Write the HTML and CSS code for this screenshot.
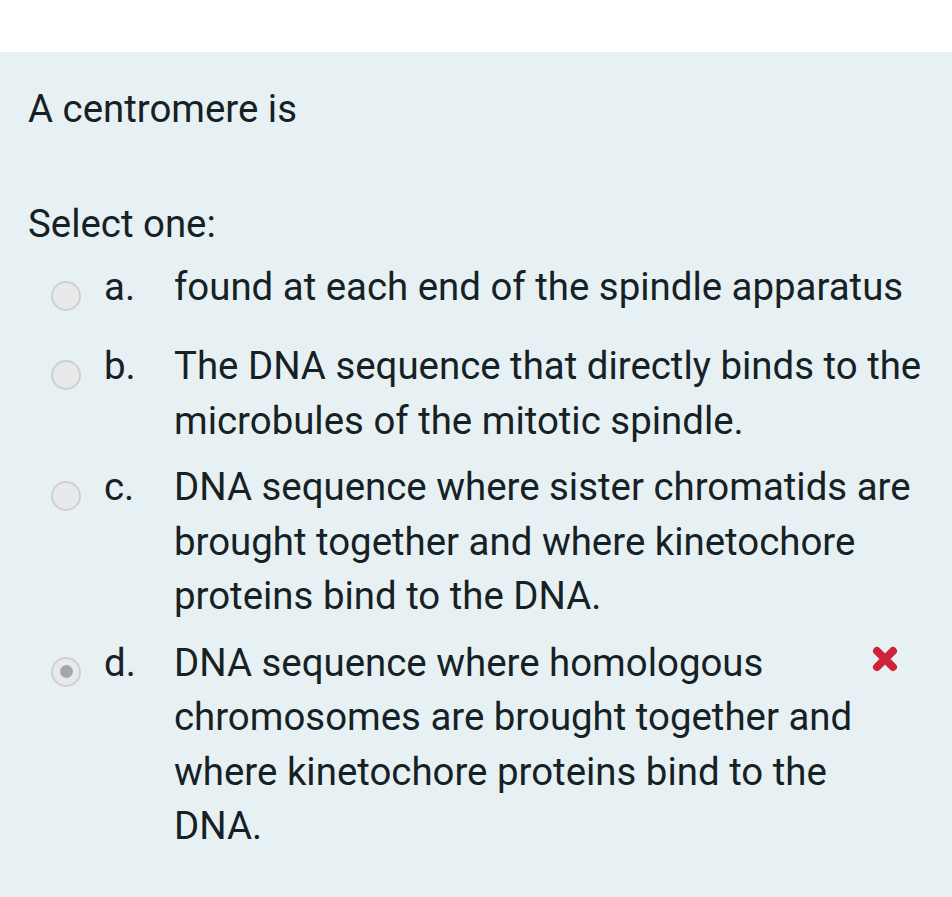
FILE: index.html
```html
<!DOCTYPE html>
<html lang="en">
<head>
<meta charset="utf-8">
<title>A centromere is</title>
<link rel="stylesheet" href="styles.css">
</head>
<body>
<div class="topbar"></div>
<div class="que">
  <div class="qtext">A centromere is</div>
  <div class="prompt">Select one:</div>
  <div class="answers">
    <div class="option first">
      <span class="radio"></span>
      <span class="letter">a.</span>
      <span class="text">found at each end of the spindle apparatus</span>
    </div>
    <div class="option">
      <span class="radio"></span>
      <span class="letter">b.</span>
      <span class="text">The DNA sequence that directly binds to the microbules of the mitotic spindle.</span>
    </div>
    <div class="option">
      <span class="radio"></span>
      <span class="letter">c.</span>
      <span class="text">DNA sequence where sister chromatids are brought together and where kinetochore proteins bind to the DNA.</span>
    </div>
    <div class="option">
      <span class="radio checked"></span>
      <span class="letter">d.</span>
      <span class="text">DNA sequence where homologous chromosomes are brought together and where kinetochore proteins bind to the DNA.</span>
      <svg class="wrong" width="30" height="30" viewBox="0 0 30 30" aria-hidden="true">
        <path d="M7 7 L23 23 M23 7 L7 23" stroke="#cf2337" stroke-width="8" stroke-linecap="round" fill="none"/>
      </svg>
    </div>
  </div>
</div>
</body>
</html>
```
FILE: styles.css
```css
html, body {
  margin: 0;
  padding: 0;
  background: #ffffff;
}
body {
  font-family: Roboto, "Noto Sans", "Liberation Sans", sans-serif;
  font-size: 38.4px;
  line-height: 54.5px;
  color: #162125;
}
.topbar {
  height: 52px;
  background: #ffffff;
}
.que {
  background: #e7f1f3;
  padding: 30px 16px 60px 28px;
  min-height: 760px;
}
.qtext {
  margin: 0;
}
.prompt {
  margin-top: 60px;
}
.answers {
  margin-top: 9px;
  display: flex;
  flex-direction: column;
  gap: 12px;
}
.option {
  display: flex;
  align-items: flex-start;
  margin-left: 23px;
}
.option.first {
  margin-bottom: 12.5px;
}
.radio {
  flex: none;
  box-sizing: border-box;
  width: 30px;
  height: 30px;
  margin-top: 21px;
  border-radius: 50%;
  border: 2px solid #cfd0d1;
  background: #e8e9ea;
  display: flex;
  align-items: center;
  justify-content: center;
}
.radio.checked::after {
  content: "";
  width: 13px;
  height: 13px;
  border-radius: 50%;
  background: #a6a7a8;
}
.letter {
  flex: none;
  width: 70px;
  margin-left: 23px;
}
.text {
  flex: 1;
  min-width: 0;
}
.wrong {
  flex: none;
  margin: 8px 36px 0 6px;
}
```
